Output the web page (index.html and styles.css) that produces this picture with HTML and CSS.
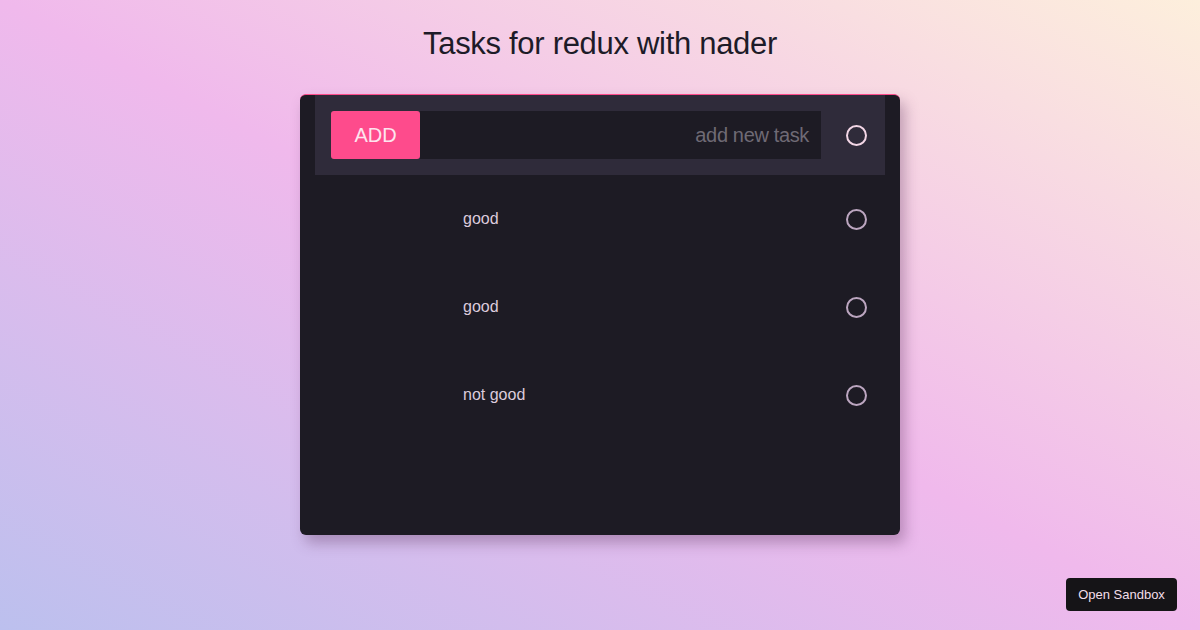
FILE: index.html
```html
<!DOCTYPE html>
<html>
<head>
<meta charset="utf-8">
<link rel="stylesheet" href="styles.css">
</head>
<body>
<main class="page">
  <h1 class="title">Tasks for redux with nader</h1>
  <section class="card">
    <div class="header">
      <div class="form">
        <button class="add">ADD</button>
        <div class="input">add new task</div>
      </div>
      <span class="check check-head"></span>
    </div>
    <ul class="list">
      <li class="row"><span class="task">good</span><span class="check"></span></li>
      <li class="row"><span class="task">good</span><span class="check"></span></li>
      <li class="row"><span class="task">not good</span><span class="check"></span></li>
    </ul>
  </section>
</main>
<a class="sandbox">Open Sandbox</a>
</body>
</html>
```
FILE: styles.css
```css
html, body {
  margin: 0;
  padding: 0;
  width: 1200px;
  height: 630px;
  overflow: hidden;
}
body {
  background: linear-gradient(to top right, #bcc0ee 0%, #f0b9ec 50%, #fdefdc 100%);
  font-family: "Liberation Sans", Arial, sans-serif;
  position: relative;
}
.page {
  display: flex;
  flex-direction: column;
  align-items: center;
}
.title {
  margin: 24px 0 0;
  height: 40px;
  font-size: 31px;
  line-height: 40px;
  font-weight: 400;
  color: #1d1b28;
  letter-spacing: -0.3px;
}
.card {
  margin-top: 30px;
  width: 600px;
  height: 441px;
  box-sizing: border-box;
  background: #1d1b24;
  border-top: 1px solid #fe4b8c;
  border-radius: 6px;
  box-shadow: 5px 8px 14px rgba(90, 50, 90, 0.35);
  padding: 0 15px;
}
.header {
  height: 80px;
  background: #2f2b3a;
  display: flex;
  align-items: center;
  padding: 0 18px 0 16px;
}
.form {
  display: flex;
  height: 48px;
  width: 490px;
}
.add {
  width: 89px;
  height: 48px;
  border: none;
  border-radius: 3px;
  background: #fe4b8c;
  color: #fde4ee;
  font-family: inherit;
  font-size: 20px;
  padding: 0;
}
.input {
  flex: 1;
  background: #1d1b24;
  color: #6f6a75;
  font-size: 20px;
  letter-spacing: -0.35px;
  line-height: 48px;
  text-align: right;
  padding-right: 12px;
}
.check {
  width: 17px;
  height: 17px;
  border: 2px solid #bca6c0;
  border-radius: 50%;
  margin-left: auto;
}
.check-head {
  border-color: #f3d6e6;
}
.list {
  list-style: none;
  margin: 0;
  padding: 0;
}
.row {
  height: 88px;
  display: flex;
  align-items: center;
  padding: 0 18px 0 148px;
}
.task {
  color: #dccbdc;
  font-size: 16px;
}
.sandbox {
  position: absolute;
  left: 1066px;
  top: 578px;
  width: 111px;
  height: 33px;
  box-sizing: border-box;
  background: #151417;
  border-radius: 4px;
  color: #f2dfea;
  font-size: 13px;
  line-height: 33px;
  text-align: center;
}
```
